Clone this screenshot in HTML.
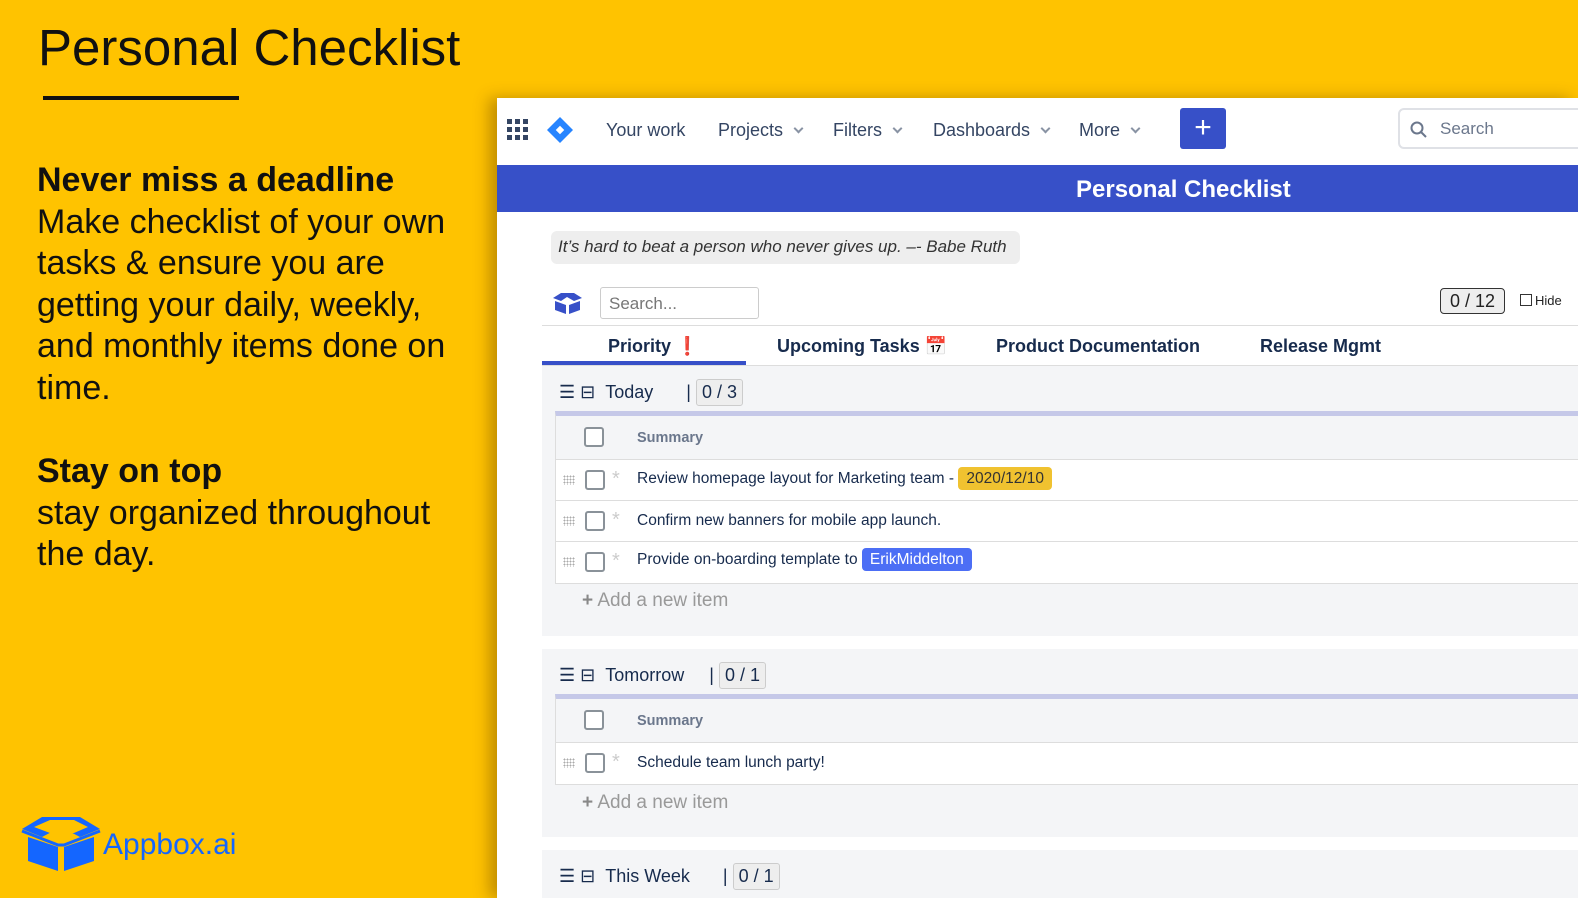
<!DOCTYPE html>
<html><head><meta charset="utf-8"><style>
*{margin:0;padding:0;box-sizing:border-box}
body{width:1578px;height:898px;overflow:hidden;background:#FFC300;font-family:"Liberation Sans",sans-serif;position:relative}
.abs{position:absolute}
h1{position:absolute;left:38px;top:18px;font-size:51px;font-weight:normal;color:#111;letter-spacing:0px}
.rule{position:absolute;left:43px;top:96px;width:196px;height:4px;background:#111}
.lt{position:absolute;left:37px;color:#111;font-size:34px;line-height:41.5px;font-weight:300}
.lt b{font-weight:bold;font-size:34px}
.panel{position:absolute;left:497px;top:98px;width:1081px;height:800px;background:#fff;box-shadow:-8px 0 14px rgba(120,80,0,.45);overflow:hidden}
.nav{position:absolute;left:0;top:0;width:100%;height:67px;color:#344563;font-size:18px}
.nav span{position:absolute;top:22px}
.chev{display:inline-block;width:7px;height:7px;border-right:2px solid #8993a4;border-bottom:2px solid #8993a4;transform:rotate(45deg);margin-left:12px;position:relative;top:-4px}
.banner{position:absolute;left:0;top:67px;width:100%;height:47px;background:#3750C8;color:#fff;font-weight:bold;font-size:24px;line-height:47px}
.sec{position:absolute;left:45px;width:1040px;background:#f4f5f7}
.tbl{position:absolute;left:13px;width:1030px;background:#fff;border:1px solid #ddd;border-top:5px solid #c5c8e8}
.row{height:41px;border-bottom:1px solid #ddd;position:relative;font-size:15.5px;color:#172b4d}
.row.h{height:44px;background:#f4f5f7;color:#6b778c;font-weight:bold;font-size:14.5px}
.cb{position:absolute;left:29px;top:10px;width:20px;height:20px;border:2px solid #8a9299;border-radius:3px;background:#fff}
.grip{position:absolute;left:7px;top:15px;width:12px;height:10px;background-image:radial-gradient(#aaa 40%,transparent 45%);background-size:3px 3px}
.star{position:absolute;left:56px;top:8px;color:#ccc;font-size:20px}
.txt{position:absolute;left:81px;top:11px}
.sh{position:absolute;left:17px;font-size:18px;color:#172b4d}
.cnt{display:inline-block;border:1px solid #ccc;background:#eee;border-radius:3px;padding:2px 5px;font-size:18px}
.add{position:absolute;left:40px;font-size:19px;color:#999}
</style></head><body>
<h1>Personal Checklist</h1>
<div class="rule"></div>
<div class="lt" style="top:160px"><b>Never miss a deadline</b><br>Make checklist of your own<br>tasks &amp; ensure you are<br>getting your daily, weekly,<br>and monthly items done on<br>time.</div>
<div class="lt" style="top:451px"><b>Stay on top</b><br>stay organized throughout<br>the day.</div>
<svg class="abs" style="left:20px;top:815px" width="82" height="58" viewBox="0 0 82 58"><path d="M2 14 L22 2 L60 2 L80 14 L60 22 L41 12 L22 22 Z" fill="#1466FF"/><path d="M14 12 L30 5 L54 5 L68 12 L54 18 L30 18Z" fill="#FFC300"/><path d="M8 22 L38 32 L38 56 L8 46Z M44 32 L74 22 L74 46 L44 56Z" fill="#1466FF"/><path d="M2 16 L38 30 L44 30 L80 16" stroke="#1466FF" stroke-width="3" fill="none"/></svg>
<div class="abs" style="left:103px;top:828px;font-size:30px;color:#1466FF">Appbox.ai</div>

<div class="panel">
 <div class="nav">
  <svg class="abs" style="left:10px;top:21px" width="21" height="21"><g fill="#344563"><rect x="0" y="0" width="5" height="5"/><rect x="8" y="0" width="5" height="5"/><rect x="16" y="0" width="5" height="5"/><rect x="0" y="8" width="5" height="5"/><rect x="8" y="8" width="5" height="5"/><rect x="16" y="8" width="5" height="5"/><rect x="0" y="16" width="5" height="5"/><rect x="8" y="16" width="5" height="5"/><rect x="16" y="16" width="5" height="5"/></g></svg>
  <svg class="abs" style="left:50px;top:19px" width="26" height="26"><path d="M13 0 L26 13 L13 26 L0 13Z" fill="#2684FF"/><rect x="10" y="10" width="6" height="6" fill="#fff" transform="rotate(45 13 13)"/></svg>
  <span style="left:109px">Your work</span>
  <span style="left:221px">Projects<i class="chev"></i></span>
  <span style="left:336px">Filters<i class="chev"></i></span>
  <span style="left:436px">Dashboards<i class="chev"></i></span>
  <span style="left:582px">More<i class="chev"></i></span>
  <div class="abs" style="left:683px;top:10px;width:46px;height:41px;background:#3750C8;border-radius:3px;color:#fff;font-size:30px;text-align:center;line-height:40px">+</div>
  <div class="abs" style="left:901px;top:10px;width:200px;height:41px;border:2px solid #dfe1e6;border-radius:6px;color:#6b778c;font-size:17px;padding:9px 0 0 40px">Search</div>
  <svg class="abs" style="left:913px;top:23px" width="18" height="18"><circle cx="7" cy="7" r="5.5" stroke="#6b778c" stroke-width="2" fill="none"/><path d="M11 11 L16 16" stroke="#6b778c" stroke-width="2"/></svg>
 </div>
 <div class="banner"><span class="abs" style="left:579px;top:1px">Personal Checklist</span></div>
 <div class="abs" style="left:54px;top:133px;width:469px;height:33px;background:#eee;border-radius:6px;font-style:italic;font-size:17px;color:#333;padding:6px 0 0 7px">It’s hard to beat a person who never gives up. –- Babe Ruth</div>
 <svg class="abs" style="left:55px;top:194px" width="31" height="22" viewBox="0 0 31 22"><path d="M1 6 L9 1 L22 1 L30 6 L22 9 L15 5 L9 9Z" fill="#3750C8"/><path d="M3 9 L14 13 L14 22 L3 18Z M17 13 L28 9 L28 18 L17 22Z" fill="#3750C8"/></svg>
 <div class="abs" style="left:103px;top:189px;width:159px;height:32px;border:1px solid #ccc;border-radius:3px;font-size:17px;color:#777;padding:6px 0 0 8px">Search...</div>
 <div class="abs" style="left:943px;top:190px;width:65px;height:26px;border:1px solid #333;border-radius:4px;background:#eee;font-size:18px;text-align:center;line-height:24px;color:#222">0 / 12</div>
 <div class="abs" style="left:1023px;top:196px;width:12px;height:12px;border:1px solid #333"></div>
 <div class="abs" style="left:1038px;top:195px;font-size:13px;color:#222">Hide</div>
 <div class="abs" style="left:45px;top:227px;width:1040px;height:1px;background:#ddd"></div>
 <div class="abs" style="left:45px;top:238px;width:1040px;font-size:18px;color:#172b4d;font-weight:bold">
  <span class="abs" style="left:66px">Priority <span style="color:#d22">❗</span></span>
  <span class="abs" style="left:235px">Upcoming Tasks 📅</span>
  <span class="abs" style="left:454px">Product Documentation</span>
  <span class="abs" style="left:718px">Release Mgmt</span>
 </div>
 <div class="abs" style="left:45px;top:263px;width:204px;height:4px;background:#3750C8"></div>
 <div class="abs" style="left:45px;top:267px;width:1040px;height:1px;background:#ddd"></div>

 <div class="sec" style="top:268px;height:270px">
  <div class="sh" style="top:13px">☰ ⊟ &nbsp;Today <span style="margin-left:28px">|</span> <span class="cnt">0 / 3</span></div>
  <div class="tbl" style="top:45px">
   <div class="row h"><div class="cb" style="left:28px;top:11px"></div><div class="txt" style="top:14px">Summary</div></div>
   <div class="row"><div class="grip"></div><div class="cb"></div><div class="star">*</div><div class="txt" style="top:10px">Review homepage layout for Marketing team - <span style="background:#F0C230;border-radius:4px;padding:3px 8px;color:#333">2020/12/10</span></div></div>
   <div class="row"><div class="grip"></div><div class="cb"></div><div class="star">*</div><div class="txt">Confirm new banners for mobile app launch.</div></div>
   <div class="row" style="border-bottom:none"><div class="grip"></div><div class="cb"></div><div class="star">*</div><div class="txt" style="top:9px">Provide on-boarding template to <span style="background:#4C6EF5;border-radius:4px;padding:3px 8px;color:#fff">ErikMiddelton</span></div></div>
  </div>
  <div class="add" style="top:224px"><b style="color:#888">+</b> Add a new item</div>
 </div>

 <div class="sec" style="top:551px;height:188px">
  <div class="sh" style="top:13px">☰ ⊟ &nbsp;Tomorrow <span style="margin-left:20px">|</span> <span class="cnt">0 / 1</span></div>
  <div class="tbl" style="top:45px">
   <div class="row h"><div class="cb" style="left:28px;top:11px"></div><div class="txt" style="top:14px">Summary</div></div>
   <div class="row" style="border-bottom:none"><div class="grip"></div><div class="cb"></div><div class="star">*</div><div class="txt">Schedule team lunch party!</div></div>
  </div>
  <div class="add" style="top:143px"><b style="color:#888">+</b> Add a new item</div>
 </div>

 <div class="sec" style="top:752px;height:60px">
  <div class="sh" style="top:13px">☰ ⊟ &nbsp;This Week <span style="margin-left:28px">|</span> <span class="cnt">0 / 1</span></div>
 </div>
</div>
</body></html>
